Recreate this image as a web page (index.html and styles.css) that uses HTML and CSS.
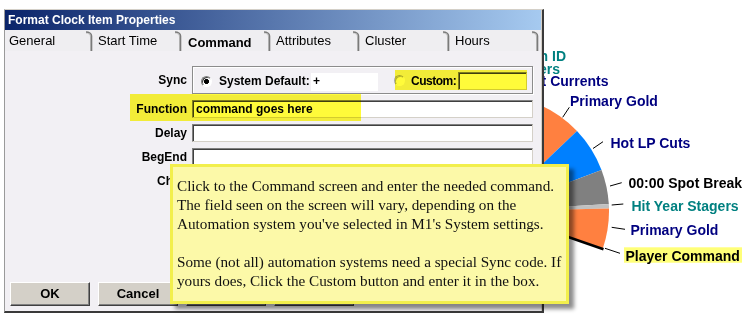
FILE: index.html
```html
<!DOCTYPE html>
<html>
<head>
<meta charset="utf-8">
<title>Format Clock Item Properties</title>
<link rel="stylesheet" href="styles.css">
</head>
<body>
<div class="stage">
  <svg class="chart" width="748" height="318" viewBox="0 0 748 318">
    <path class="s-orange" d="M493 211 L540.2 105 A116 116 0 0 1 577 131 Z"/>
    <path class="s-blue" d="M493 211 L577 131 A116 116 0 0 1 601.5 170 Z"/>
    <path class="s-gray" d="M493 211 L601.5 170 A116 116 0 0 1 608.8 204 Z"/>
    <path class="s-lgray" d="M493 211 L608.8 204 A116 116 0 0 1 609 208.4 Z"/>
    <path class="s-orange" d="M493 211 L609 208.4 A116 116 0 0 1 602.9 248.2 Z"/>
    <line class="s-black" x1="493" y1="211" x2="603.5" y2="249.2"/>
    <g class="leaders">
      <line x1="562.7" y1="117.3" x2="569.3" y2="107.3"/>
      <line x1="593" y1="148.5" x2="603" y2="141.7"/>
      <line x1="610" y1="186" x2="621.7" y2="182.7"/>
      <line x1="611.7" y1="205" x2="623.3" y2="204"/>
      <line x1="611.7" y1="227.3" x2="625" y2="229.3"/>
      <line x1="605" y1="248.3" x2="620" y2="253.3"/>
    </g>
    <text class="cl c-teal" x="566" y="61" text-anchor="end">Station ID</text>
    <text class="cl c-teal" x="560" y="73.5" text-anchor="end">Stagers</text>
    <text class="cl c-navy" x="608.5" y="86" text-anchor="end">Hot Currents</text>
    <text class="cl c-navy" x="570" y="106">Primary Gold</text>
    <text class="cl c-navy" x="610.5" y="147.5">Hot LP Cuts</text>
    <text class="cl c-black" x="628.5" y="188">00:00 Spot Break</text>
    <text class="cl c-teal" x="631.5" y="210.5">Hit Year Stagers</text>
    <text class="cl c-navy" x="630.5" y="235">Primary Gold</text>
    <rect class="cl-mark" x="624" y="247.3" width="118" height="15.4"/>
    <text class="cl c-black" x="625.5" y="260.5">Player Command</text>
  </svg>

  <div class="dialog">
    <div class="titlebar">Format Clock Item Properties</div>
    <div class="tabs">
      <div class="tab tab-first"><span class="tab-text">General</span><svg class="curl" width="7" height="21" viewBox="0 0 7 21"><path class="curl-l" d="M0 3 C2.5 3 4.5 4.5 4.5 7 V21"/><path class="curl-d" d="M0 2 C3 2 5.5 3.5 5.5 6 V21"/></svg></div>
      <div class="tab"><span class="tab-text">Start Time</span><svg class="curl" width="7" height="21" viewBox="0 0 7 21"><path class="curl-l" d="M0 3 C2.5 3 4.5 4.5 4.5 7 V21"/><path class="curl-d" d="M0 2 C3 2 5.5 3.5 5.5 6 V21"/></svg></div>
      <div class="tab tab-active"><span class="tab-text tab-text-active">Command</span><svg class="curl" width="7" height="21" viewBox="0 0 7 21"><path class="curl-l" d="M0 3 C2.5 3 4.5 4.5 4.5 7 V21"/><path class="curl-d" d="M0 2 C3 2 5.5 3.5 5.5 6 V21"/></svg></div>
      <div class="tab"><span class="tab-text">Attributes</span><svg class="curl" width="7" height="21" viewBox="0 0 7 21"><path class="curl-l" d="M0 3 C2.5 3 4.5 4.5 4.5 7 V21"/><path class="curl-d" d="M0 2 C3 2 5.5 3.5 5.5 6 V21"/></svg></div>
      <div class="tab"><span class="tab-text">Cluster</span><svg class="curl" width="7" height="21" viewBox="0 0 7 21"><path class="curl-l" d="M0 3 C2.5 3 4.5 4.5 4.5 7 V21"/><path class="curl-d" d="M0 2 C3 2 5.5 3.5 5.5 6 V21"/></svg></div>
      <div class="tab"><span class="tab-text">Hours</span><svg class="curl" width="7" height="21" viewBox="0 0 7 21"><path class="curl-l" d="M0 3 C2.5 3 4.5 4.5 4.5 7 V21"/><path class="curl-d" d="M0 2 C3 2 5.5 3.5 5.5 6 V21"/></svg></div>
      <div class="tab-rest"></div>
    </div>
    <div class="panel">
      <div class="form">
        <div class="lbl">Sync</div>
        <div class="group">
          <span class="radio radio-on"></span>
          <span class="sd-label">System Default:</span>
          <span class="sd-value">+</span>
          <span class="radio radio-off"></span>
          <span class="custom-label">Custom:</span>
          <span class="custom-input"></span>
        </div>
        <div class="lbl">Function</div>
        <div class="field">command goes here</div>
        <div class="lbl">Delay</div>
        <div class="field"></div>
        <div class="lbl">BegEnd</div>
        <div class="field"></div>
        <div class="lbl">Chan</div>
        <div class="field"></div>
      </div>
      <div class="buttons">
        <div class="btn">OK</div>
        <div class="btn">Cancel</div>
        <div class="btn"></div>
        <div class="btn"></div>
      </div>
    </div>
  </div>

  <div class="hl hl-func"></div>
  <div class="hl hl-custom"></div>

  <div class="tip">
    <p>Click to the Command screen and enter the needed command.<br>The field seen on the screen will vary, depending on the<br>Automation system you've selected in M1's System settings.</p>
    <p>Some (not all) automation systems need a special Sync code. If<br>yours does, Click the Custom button and enter it in the box.</p>
  </div>
</div>
</body>
</html>
```

FILE: styles.css
```css
* { box-sizing: border-box; }

body {
  margin: 0;
  background: #ffffff;
}

.stage {
  position: relative;
  width: 748px;
  height: 318px;
  overflow: hidden;
  padding: 9px 0 0 4px;
  font-family: "Liberation Sans", Arial, sans-serif;
  color: #000;
}

/* ---------- pie chart canvas ---------- */
.chart {
  position: absolute;
  left: 0;
  top: 0;
}
.s-orange { fill: #ff8040; }
.s-blue { fill: #0080ff; }
.s-gray { fill: #808080; }
.s-lgray { fill: #c0c0c0; }
.s-black { stroke: #000; stroke-width: 2.6; }
.leaders line { stroke: #000; stroke-width: 1; }
.cl {
  font-family: "Liberation Sans", Arial, sans-serif;
  font-weight: bold;
  font-size: 14px;
}
.c-navy { fill: #000080; }
.c-teal { fill: #008080; }
.c-black { fill: #000; }
.cl-mark { fill: #ffff78; }

/* ---------- dialog ---------- */
.dialog {
  position: relative;
  z-index: 1;
  width: 540px;
  height: 304px;
  display: flex;
  flex-direction: column;
  background: #d4d0c8;
  border-top: 1px solid #d4d0c8;
  border-left: 1px solid #9a9a9a;
  border-right: 2px solid #3a3a3a;
  border-bottom: 2px solid #3a3a3a;
  padding-right: 1px;
}

.titlebar {
  height: 20px;
  flex: none;
  background: linear-gradient(to right, #0a246a, #a6caf0);
  color: #fff;
  font-weight: bold;
  font-size: 12px;
  line-height: 20px;
  padding-left: 3px;
  white-space: nowrap;
}

.tabs {
  height: 21px;
  flex: none;
  display: grid;
  grid-template-columns: 88px 89px 89px 89px 90px 89px 1fr;
  background: #efeef1;
}

.tab {
  display: flex;
  justify-content: space-between;
  align-items: flex-start;
  padding-left: 5px;
  font-size: 13px;
}
.tab-first { padding-left: 4px; }

.tab-text {
  line-height: 22px;
  white-space: nowrap;
}
.tab-text-active {
  font-weight: bold;
  padding-top: 2px;
  padding-left: 1px;
}

.curl {
  flex: none;
  width: 7px;
  height: 21px;
}
.curl-d { fill: none; stroke: #7a7a7a; stroke-width: 1.6; }
.curl-l { fill: none; stroke: #c6c6c6; stroke-width: 1; }

.panel {
  flex: 1;
  display: flex;
  flex-direction: column;
  background: #f2f0f4;
  padding: 15px 0 5px 0;
}

.form {
  display: grid;
  grid-template-columns: 182px 341px;
  column-gap: 5px;
  row-gap: 6px;
  align-items: center;
}

.lbl {
  text-align: right;
  font-weight: bold;
  font-size: 12px;
  line-height: 14px;
  white-space: nowrap;
}

.group {
  height: 28px;
  display: flex;
  align-items: flex-start;
  padding-left: 8px;
  border: 1px solid #8c8c8c;
  box-shadow: inset 1px 1px 0 #ffffff, 1px 1px 0 #ffffff;
  font-weight: bold;
  font-size: 12px;
}

.radio {
  flex: none;
  width: 11px;
  height: 11px;
  border-radius: 50%;
  border: 1px solid;
  border-color: #808080 #ffffff #ffffff #808080;
  box-shadow: inset 1px 1px 0 #404040;
}
.radio-on {
  margin-top: 9px;
  background: radial-gradient(circle, #000 0 2.2px, #ffffff 2.8px);
}
.radio-off {
  margin-top: 8px;
  margin-left: 16px;
  background: #ffffff;
  border-color: #a9a9a9 #ffffff #ffffff #a9a9a9;
  box-shadow: inset 1px 1px 0 #b8b8b8;
}

.sd-label {
  flex: none;
  width: 92px;
  margin: 7px 0 0 7px;
  line-height: 14px;
  white-space: nowrap;
}
.sd-value {
  flex: none;
  width: 67px;
  height: 18px;
  margin-top: 6px;
  padding-left: 2px;
  background: #ffffff;
  line-height: 16px;
}
.custom-label {
  flex: none;
  width: 47px;
  margin: 7px 0 0 6px;
  line-height: 14px;
  letter-spacing: -0.5px;
  white-space: nowrap;
}
.custom-input {
  flex: none;
  width: 69px;
  height: 18px;
  margin-top: 5px;
  background: #ffffff;
  border: 1px solid;
  border-color: #808080 #d4d0c8 #d4d0c8 #808080;
  box-shadow: inset 1px 1px 0 #404040;
}

.field {
  height: 18px;
  background: #ffffff;
  border: 1px solid;
  border-color: #808080 #d4d0c8 #d4d0c8 #808080;
  box-shadow: inset 1px 1px 0 #404040;
  padding-left: 3px;
  font-weight: bold;
  font-size: 12px;
  line-height: 16px;
  white-space: nowrap;
}

.buttons {
  margin-top: auto;
  display: flex;
  gap: 8px;
  padding-left: 5px;
}
.btn {
  width: 80px;
  height: 24px;
  background: #d4d0c8;
  border: 1px solid;
  border-color: #ffffff #404040 #404040 #ffffff;
  box-shadow: inset -1px -1px 0 #808080;
  font-weight: bold;
  font-size: 13px;
  line-height: 21px;
  text-align: center;
}

/* ---------- highlighter marks ---------- */
.hl {
  position: absolute;
  z-index: 2;
  background: #fffb3a;
  mix-blend-mode: multiply;
}
.hl-func { left: 130px; top: 94px; width: 231px; height: 27px; }
.hl-custom { left: 395px; top: 70px; width: 132px; height: 20px; }

/* ---------- callout ---------- */
.tip {
  position: absolute;
  z-index: 3;
  left: 170px;
  top: 164px;
  width: 399px;
  height: 140px;
  background: #fcf9a8;
  border: 3px solid #f2ef4c;
  box-shadow: 5px 5px 4px rgba(0, 0, 0, 0.45);
  padding: 9px 0 0 4px;
  font-family: "Liberation Serif", "Times New Roman", serif;
  font-size: 15.2px;
  line-height: 19px;
  color: #111;
  white-space: nowrap;
}
.tip p { margin: 0 0 19px; }
```
